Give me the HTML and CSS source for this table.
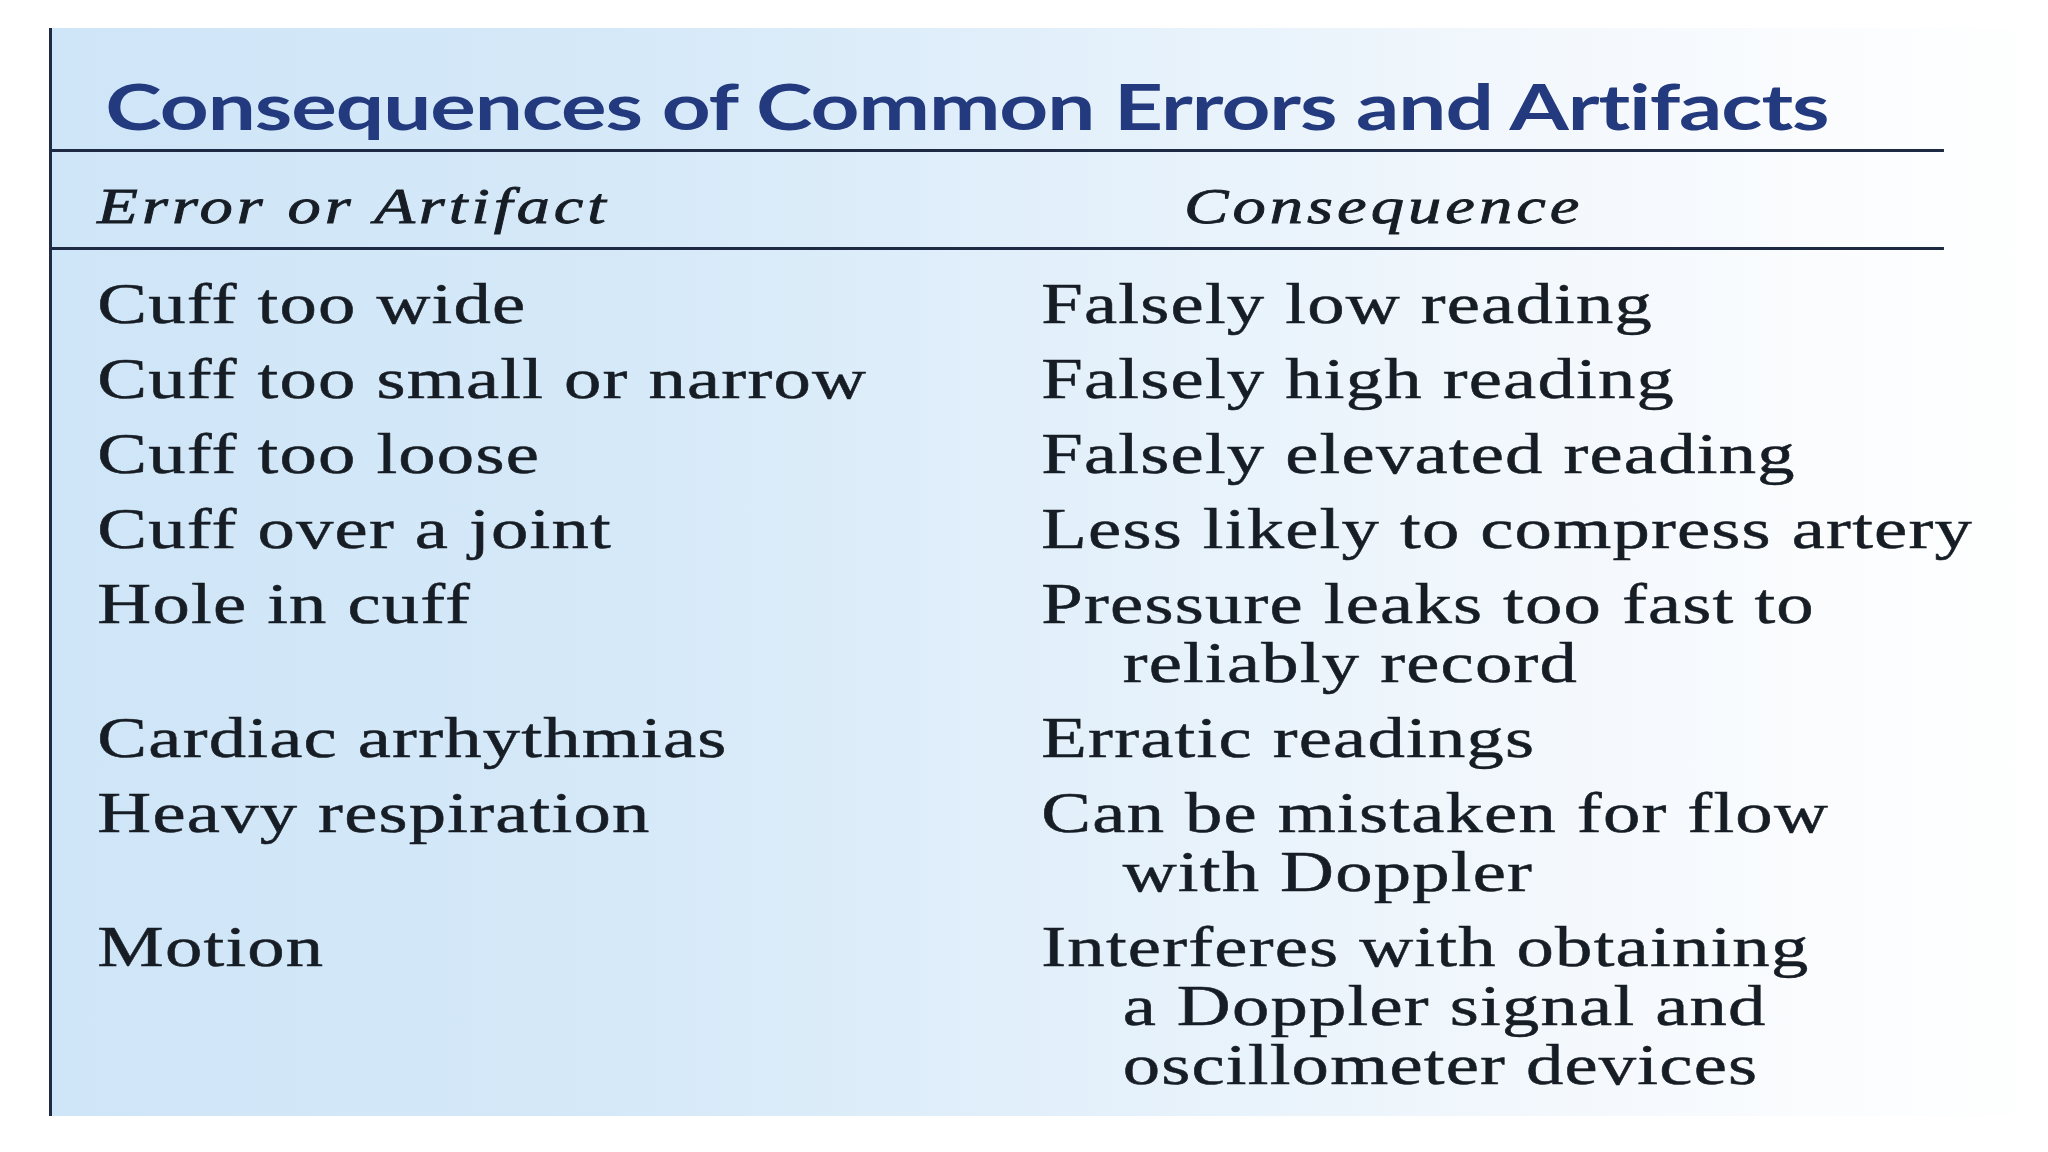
FILE: index.html
```html
<!DOCTYPE html>
<html lang="en">
<head>
<meta charset="utf-8">
<title>Consequences of Common Errors and Artifacts</title>
<link rel="stylesheet" href="styles.css">
</head>
<body>
<div class="panel">
  <div class="sheet">
    <h1 class="title">Consequences of Common Errors and Artifacts</h1>
    <div class="table">
      <div class="head">
        <div class="hc1">Error or Artifact</div>
        <div class="hc2">Consequence</div>
      </div>
      <div class="rows">
        <div class="row"><div class="c1">Cuff too wide</div><div class="c2">Falsely low reading</div></div>
        <div class="row"><div class="c1">Cuff too small or narrow</div><div class="c2">Falsely high reading</div></div>
        <div class="row"><div class="c1">Cuff too loose</div><div class="c2">Falsely elevated reading</div></div>
        <div class="row"><div class="c1">Cuff over a joint</div><div class="c2">Less likely to compress artery</div></div>
        <div class="row"><div class="c1">Hole in cuff</div><div class="c2">Pressure leaks too fast to<br>reliably record</div></div>
        <div class="row"><div class="c1">Cardiac arrhythmias</div><div class="c2">Erratic readings</div></div>
        <div class="row"><div class="c1">Heavy respiration</div><div class="c2">Can be mistaken for flow<br>with Doppler</div></div>
        <div class="row"><div class="c1">Motion</div><div class="c2">Interferes with obtaining<br>a Doppler signal and<br>oscillometer devices</div></div>
      </div>
    </div>
  </div>
</div>
</body>
</html>
```

FILE: styles.css
```css
html, body {
  margin: 0;
  padding: 0;
  background: #ffffff;
}

body {
  width: 2048px;
  height: 1152px;
  overflow: hidden;
}

.panel {
  margin: 28px 0 0 49px;
  border-left: 3px solid #1f2b44;
  padding: 38px 0 21px;
  background: linear-gradient(90deg, #cfe6f8 0%, #d4e8f8 25%, #dfeefa 45%, #e9f3fb 60%, #f3f8fd 75%, #fafcfe 88%, #ffffff 100%);
}

.sheet {
  width: 1419px;
  transform: scaleX(1.3333);
  transform-origin: 0 0;
}

.title {
  margin: 0 0 3px;
  padding-left: 40px;
  font-family: Lato, "Open Sans", sans-serif;
  font-weight: 700;
  font-size: 64px;
  line-height: 80px;
  letter-spacing: -0.8px;
  color: #243a7e;
  white-space: nowrap;
}

.table {
  border-top: 3px solid #1e2a44;
  color: #171d25;
  font-family: "Liberation Serif", "Times New Roman", serif;
  -webkit-text-stroke: 0.5px #171d25;
}

.head {
  display: grid;
  grid-template-columns: 742px 1fr;
  padding: 24px 0 11px;
  border-bottom: 3px solid #1e2a44;
  font-style: italic;
  font-size: 50px;
  line-height: 60px;
  letter-spacing: 3px;
  white-space: nowrap;
  -webkit-text-stroke: 0.8px #171d25;
}

.hc1 {
  padding-left: 34px;
}

.hc2 {
  padding-left: 107px;
}

.rows {
  display: flex;
  flex-direction: column;
  gap: 16px;
  padding-top: 25px;
  font-size: 56px;
  line-height: 59px;
  letter-spacing: 0.9px;
}

.row {
  display: grid;
  grid-template-columns: 742px 1fr;
}

.c1 {
  padding-left: 34px;
  white-space: nowrap;
}

.c2 {
  padding-left: 61px;
  text-indent: -61px;
  white-space: nowrap;
}
```
